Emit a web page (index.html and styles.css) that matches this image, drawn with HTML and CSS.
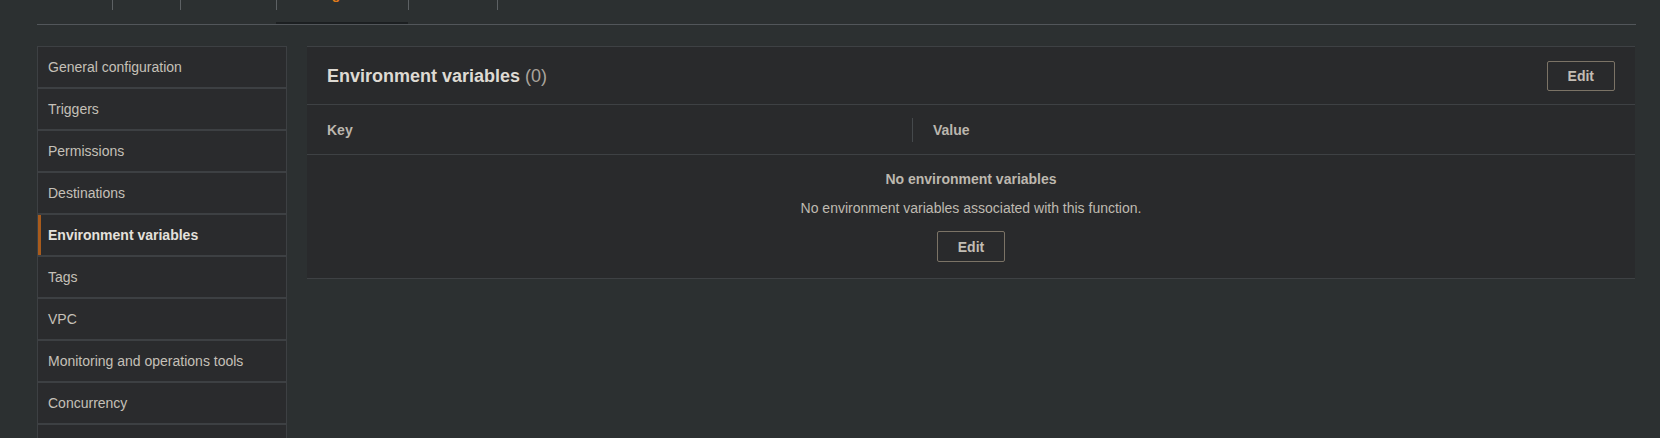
FILE: index.html
```html
<!DOCTYPE html>
<html lang="en">
<head>
<meta charset="utf-8">
<title>Environment variables</title>
<link rel="stylesheet" href="styles.css">
</head>
<body>
<div class="page">
  <nav class="tabs">
    <div class="tab">Code</div>
    <div class="tab">Test</div>
    <div class="tab tab-wide">Monitor</div>
    <div class="tab active">Configuration</div>
    <div class="tab">Aliases</div>
    <div class="tab">Versions</div>
  </nav>
  <div class="layout">
    <ul class="side">
      <li class="side-item">General configuration</li>
      <li class="side-item">Triggers</li>
      <li class="side-item">Permissions</li>
      <li class="side-item">Destinations</li>
      <li class="side-item active">Environment variables</li>
      <li class="side-item">Tags</li>
      <li class="side-item">VPC</li>
      <li class="side-item">Monitoring and operations tools</li>
      <li class="side-item">Concurrency</li>
      <li class="side-item">Asynchronous invocation</li>
    </ul>
    <section class="panel">
      <header class="panel-head">
        <h2 class="panel-title">Environment variables <span class="count">(0)</span></h2>
        <button class="btn">Edit</button>
      </header>
      <div class="cols">
        <div class="col col-key">Key</div>
        <div class="col col-value">Value</div>
      </div>
      <div class="empty">
        <div class="empty-title">No environment variables</div>
        <div class="empty-desc">No environment variables associated with this function.</div>
        <button class="btn btn-body">Edit</button>
      </div>
    </section>
  </div>
</div>
</body>
</html>
```

FILE: styles.css
```css
html, body {
  margin: 0;
  padding: 0;
  height: 438px;
  overflow: hidden;
  background: #2c3031;
}
body {
  font-family: "Liberation Sans", Arial, sans-serif;
  font-size: 14px;
  color: #c5c0b8;
}
.page {
  padding: 0 25px 0 37px;
}
.tabs {
  display: flex;
  height: 47px;
  margin-top: -23px;
  margin-right: -1px;
  border-bottom: 1px solid #52565a;
}
.tab {
  position: relative;
  padding: 7px 20px 0;
  font-weight: 700;
  font-size: 14px;
  line-height: 20px;
  color: #a9a49c;
}
.tab-wide {
  padding: 7px 22px 0 23px;
}
.tab + .tab::before {
  content: "";
  position: absolute;
  left: 0;
  top: 1px;
  height: 32px;
  border-left: 1px solid #5d6164;
}
.tab.active {
  color: #e07b1a;
  box-shadow: inset 0 -2px 0 #1c1f21;
}
.layout {
  display: flex;
  gap: 20px;
  padding: 21px 0 0;
}
.side {
  list-style: none;
  margin: 0;
  padding: 0;
  width: 250px;
  flex: none;
}
.side-item {
  box-sizing: border-box;
  height: 42px;
  display: flex;
  align-items: center;
  padding-left: 10px;
  background: #2a2b2d;
  border: 1px solid #3d4043;
  line-height: 20px;
}
.side-item.active {
  font-weight: 700;
  color: #e4e1dc;
  box-shadow: inset 3px 0 0 #a85b1c;
}
.panel {
  flex: 1;
  align-self: flex-start;
  background: #292a2c;
  border-top: 1px solid #3e4144;
  border-bottom: 1px solid #3e4144;
}
.panel-head {
  box-sizing: border-box;
  height: 58px;
  display: flex;
  align-items: center;
  justify-content: space-between;
  padding: 0 20px;
  border-bottom: 1px solid #3e4144;
}
.panel-title {
  margin: 0;
  font-size: 18px;
  font-weight: 700;
  line-height: 24px;
  color: #dedad3;
}
.count {
  font-weight: 400;
  color: #a9a49c;
}
.btn {
  box-sizing: border-box;
  height: 30px;
  padding: 0 20px;
  background: transparent;
  border: 1px solid #7b7366;
  border-radius: 2px;
  font-family: inherit;
  font-size: 14px;
  font-weight: 700;
  color: #c2bdb4;
}
.cols {
  box-sizing: border-box;
  height: 50px;
  display: flex;
  align-items: center;
  border-bottom: 1px solid #3e4144;
}
.col {
  font-weight: 700;
  color: #bbb6ae;
  line-height: 24px;
}
.col-key {
  box-sizing: border-box;
  width: 605px;
  padding-left: 20px;
}
.col-value {
  padding-left: 20px;
  border-left: 1px solid #45494c;
}
.empty {
  display: flex;
  flex-direction: column;
  align-items: center;
  padding: 14px 0 16px;
  line-height: 20px;
}
.empty-title {
  font-weight: 700;
  color: #bdb8af;
}
.empty-desc {
  margin-top: 9px;
  color: #bfbab1;
}
.btn-body {
  margin-top: 13px;
  height: 31px;
}
```
